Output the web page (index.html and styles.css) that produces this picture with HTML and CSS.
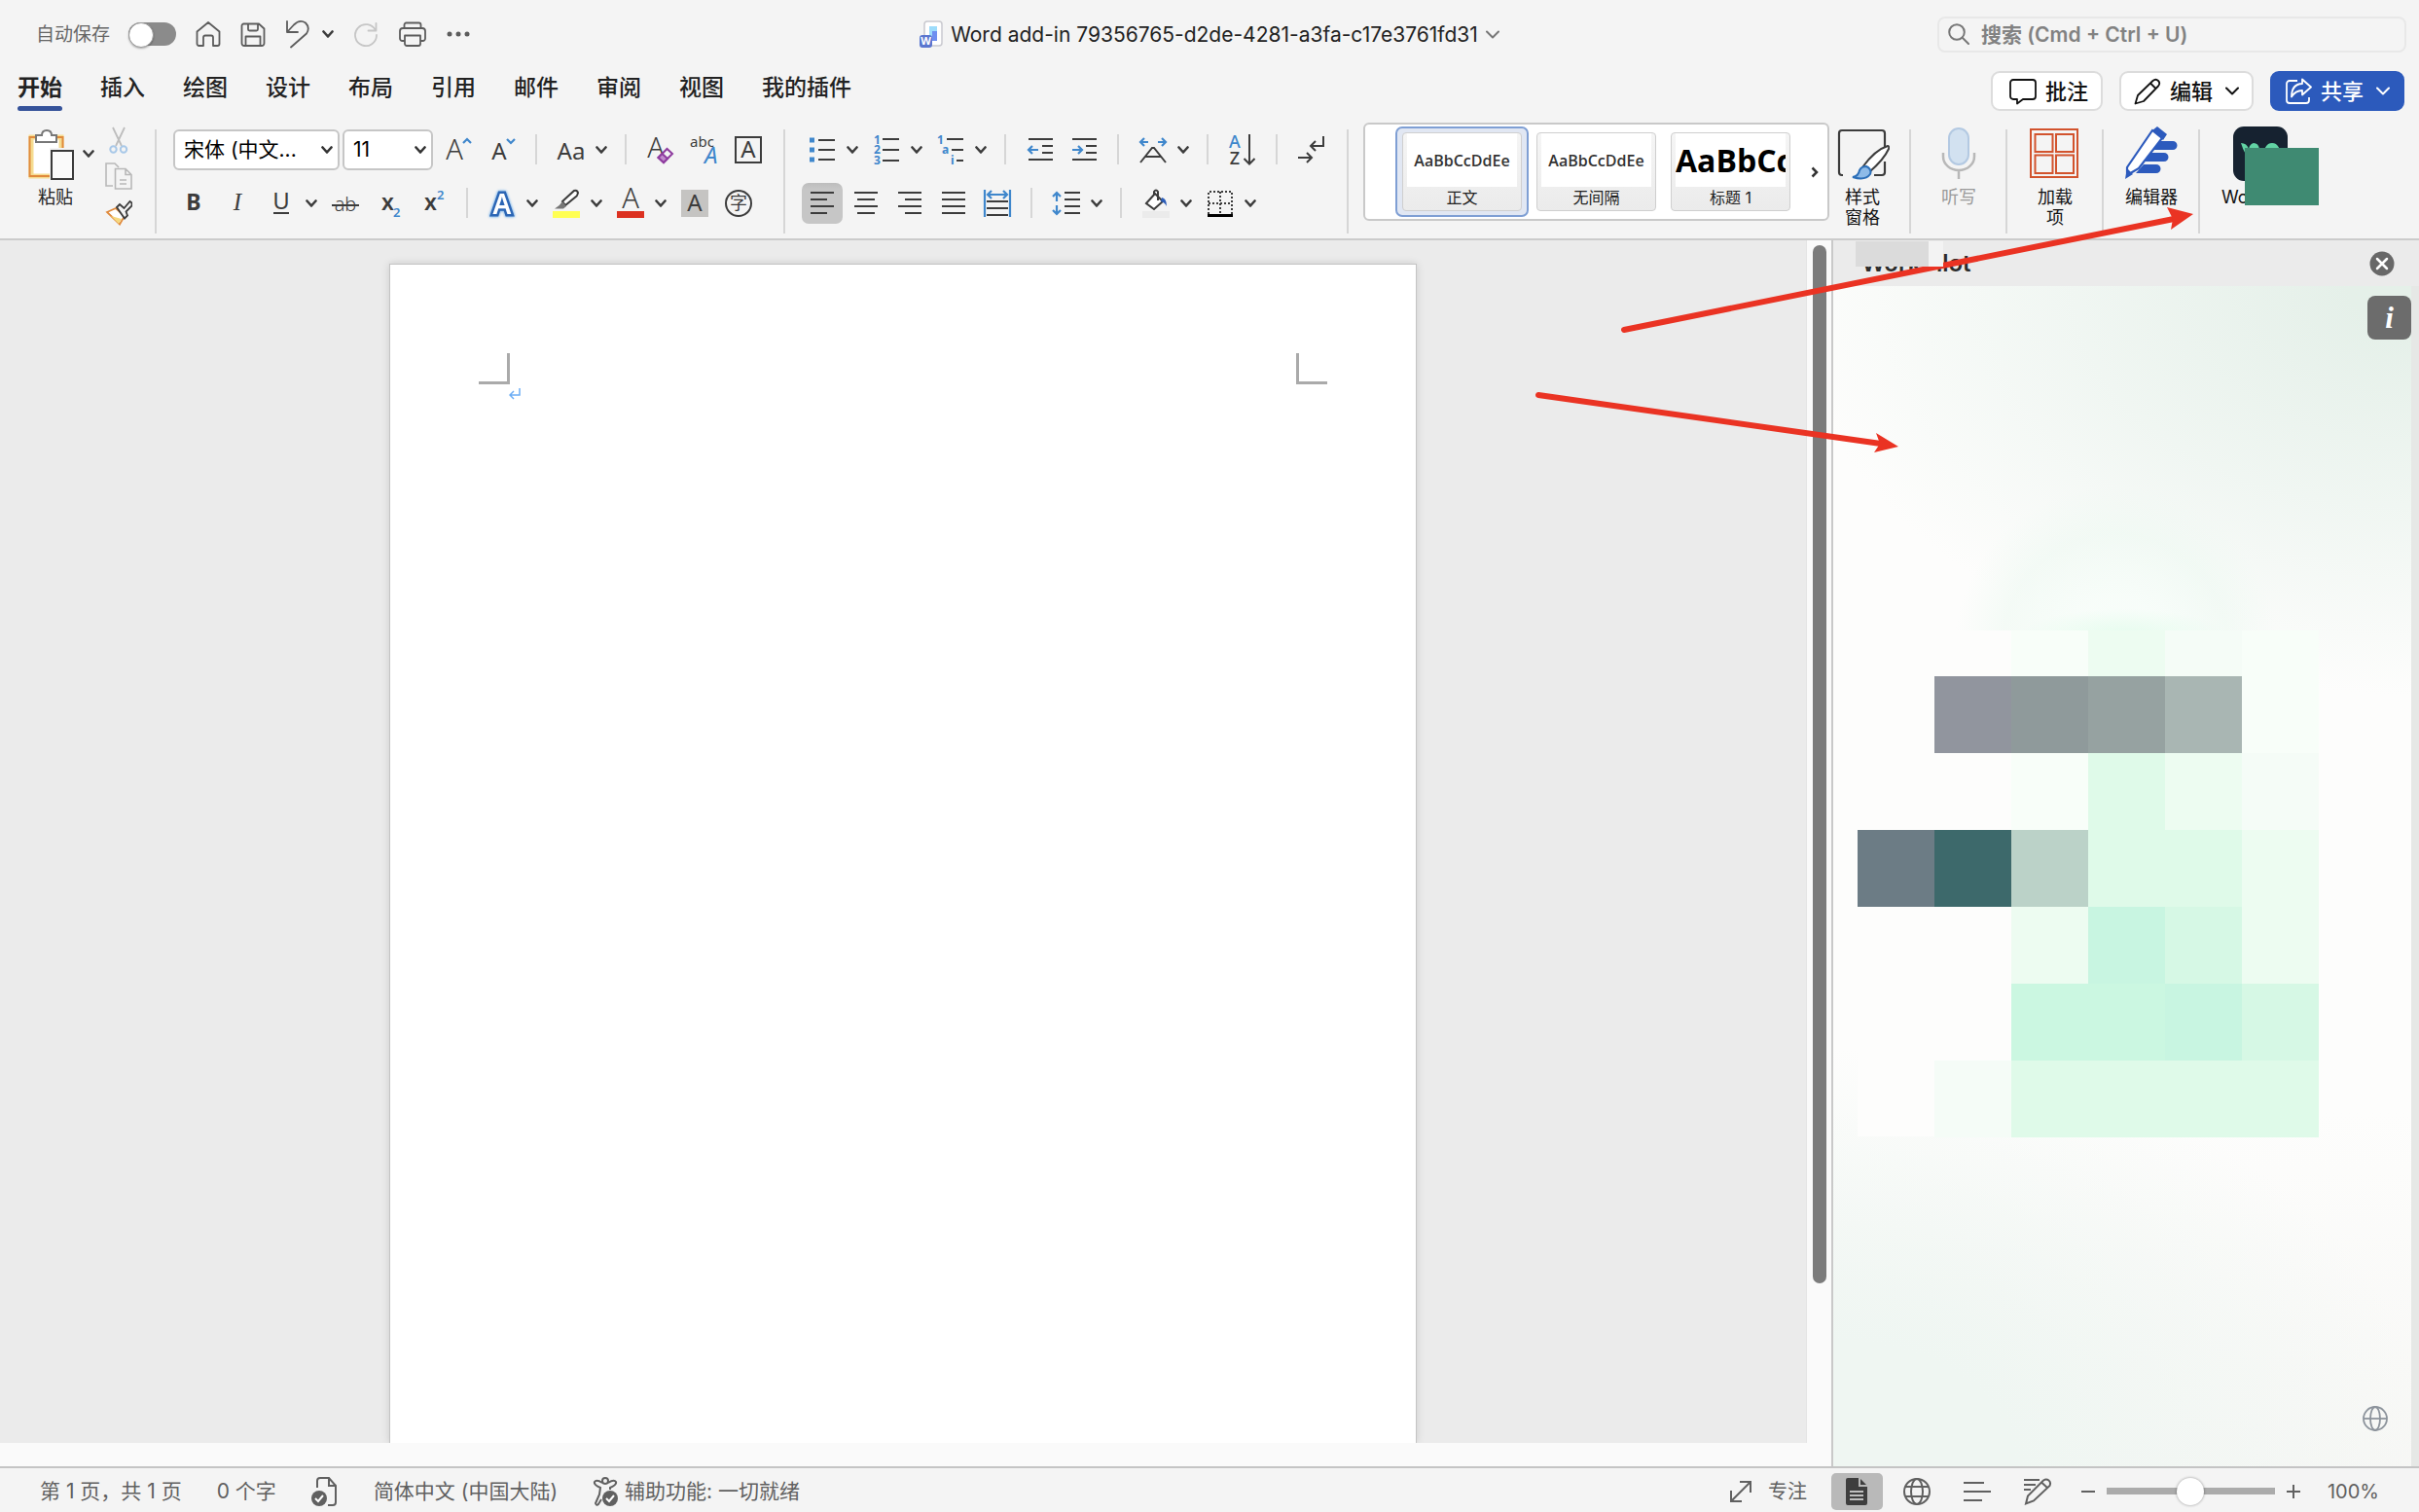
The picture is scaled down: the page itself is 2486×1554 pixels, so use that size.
FILE: index.html
```html
<!DOCTYPE html>
<html lang="zh-CN">
<head>
<meta charset="utf-8">
<title>Word add-in 79356765-d2de-4281-a3fa-c17e3761fd31</title>
<link rel="stylesheet" href="styles.css">
</head>
<body>
<svg class="defs" aria-hidden="true">
  <symbol id="chev" viewBox="0 0 12 8"><path d="M1.5 1.5 6 6.5 10.5 1.5" fill="none" stroke="currentColor" stroke-width="2.6" stroke-linecap="round" stroke-linejoin="round"/></symbol>
  <symbol id="chev-thin" viewBox="0 0 14 9"><path d="M1 1.500 7 7.500 13 1.500" fill="none" stroke="currentColor" stroke-width="2" stroke-linecap="round" stroke-linejoin="round"/></symbol>
</svg>

<header class="titlebar">
  <div class="quick">
    <label class="autosave">自动保存<input type="checkbox" class="toggle"></label>
    <button class="qbtn" aria-label="主页"><svg width="26" height="28" viewBox="0 0 26 28"><path d="M1.500 11.500 13 2l11.500 9.500V24a2 2 0 0 1-2 2H18v-8.500q0-2-2-2h-6q-2 0-2 2V26H3.500a2 2 0 0 1-2-2z"/></svg></button>
    <button class="qbtn" aria-label="保存"><svg width="26" height="28" viewBox="0 0 26 28"><path d="M3.500 3.500H19l5.500 5v15a2.500 2.500 0 0 1-2.500 2.500H4a2.500 2.500 0 0 1-2.500-2.500V5.500a2 2 0 0 1 2-2zM8 3.500V9a1.500 1.500 0 0 0 1.500 1.500h7A1.500 1.500 0 0 0 18 9V3.500M5.500 26v-9.500h15V26"/></svg></button>
    <span class="undo">
      <button class="qbtn" aria-label="撤消"><svg width="26" height="30" viewBox="0 0 26 30"><path d="M2 2v11h11M2.500 12.500 9 5.500q6-6 12-2 5 5 1 11L6 28.500"/></svg></button>
      <button class="chev dark" aria-label="撤消选项"><svg width="12" height="8"><use href="#chev"/></svg></button>
    </span>
    <button class="qbtn pale" aria-label="恢复" disabled><svg width="26" height="28" viewBox="0 0 26 28"><path d="M23.500 3v7.500h-8M23 10.500A11 11 0 1 0 24 15"/></svg></button>
    <button class="qbtn" aria-label="打印"><svg width="30" height="28" viewBox="0 0 30 28"><path d="M6.500 8V4.500a2 2 0 0 1 2-2h13a2 2 0 0 1 2 2V8M7 21H4.500A2.500 2.500 0 0 1 2 18.500v-7.500a3 3 0 0 1 3-3h20a3 3 0 0 1 3 3v7.500a2.500 2.500 0 0 1-2.500 2.500H23M7 15.500h16V24a2 2 0 0 1-2 2H9a2 2 0 0 1-2-2z"/></svg></button>
    <button class="qbtn" aria-label="更多"><svg class="solid" width="24" height="6" viewBox="0 0 24 6"><circle cx="3" cy="3" r="2.500"/><circle cx="12" cy="3" r="2.500"/><circle cx="21" cy="3" r="2.500"/></svg></button>
  </div>
  <button class="doc-title">
    <svg width="24" height="28" viewBox="0 0 24 28"><rect x="5" y="1" width="18" height="25" rx="3" fill="#fff" stroke="#c9c9cf" stroke-width="1.500"/><path d="M10 6h8v14h-8z" fill="#9ddcfb"/><path d="M13 11h5v10h-5z" fill="#6f8ff0"/><rect x="0" y="15" width="13" height="13" rx="3" fill="#5b76cf"/><text x="6.500" y="25" text-anchor="middle" class="t-badge">W</text></svg>
    <span>Word add-in 79356765-d2de-4281-a3fa-c17e3761fd31</span>
    <svg class="title-chev" width="14" height="9"><use href="#chev-thin"/></svg>
  </button>
  <label class="search">
    <svg width="22" height="22" viewBox="0 0 22 22"><circle cx="9" cy="9" r="7.800"/><path d="m15 15 6 6"/></svg>
    <input type="search" placeholder="搜索 (Cmd + Ctrl + U)" aria-label="搜索">
  </label>
</header>

<nav class="tabbar">
  <div class="tabs">
    <button class="tab active">开始</button><button class="tab">插入</button><button class="tab">绘图</button><button class="tab">设计</button><button class="tab">布局</button><button class="tab">引用</button><button class="tab">邮件</button><button class="tab">审阅</button><button class="tab">视图</button><button class="tab">我的插件</button>
  </div>
  <div class="actions">
    <button class="action"><svg width="28" height="28" viewBox="0 0 28 28"><path d="M4 2h20a3 3 0 0 1 3 3v14a3 3 0 0 1-3 3H14l-6 4.500V22H4a3 3 0 0 1-3-3V5a3 3 0 0 1 3-3z"/></svg>批注</button>
    <button class="action"><svg width="28" height="28" viewBox="0 0 28 28"><path d="M1.500 26.500 4 18 19.500 3q3-2.500 5.500 0t0 5.500L10 24zM17 5.500l5.500 5.500"/></svg>编辑<svg width="14" height="9"><use href="#chev-thin"/></svg></button>
    <button class="action primary"><svg width="28" height="28" viewBox="0 0 28 28"><path d="M13 3H5a3 3 0 0 0-3 3v17a3 3 0 0 0 3 3h17a3 3 0 0 0 3-3v-3M18 1.500l9 8-9 8v-4.500q-7 0-11 6.500 0-13 11-13.500z"/></svg>共享<svg width="14" height="9"><use href="#chev-thin"/></svg></button>
  </div>
</nav>

<section class="ribbon" aria-label="功能区">
  <div class="paste-group">
    <button class="paste">
      <span class="paste-icon"><svg width="48" height="56" viewBox="0 0 48 56"><path d="M3 11h31v40H3z" fill="#fff" stroke="#f5dc91" stroke-width="5"/><path d="M1.500 11h34v40h-34z" fill="none" stroke="#e08a3c" stroke-width="2"/><path d="M8 15h22v31H8z" fill="#fff"/><path d="M22 22h26v34H22z" fill="#f4f4f4"/><path d="M8 16V9h6q0-5 5-5t5 5h5v7z" fill="#fff" stroke="#777" stroke-width="2"/><path d="M24 25h22v29H24z" fill="#fafafa" stroke="#3a3a3a" stroke-width="2"/></svg></span>
      <span class="chev dark"><svg width="12" height="8"><use href="#chev"/></svg></span>
      <span class="paste-label">粘贴</span>
    </button>
    <div class="clip-col">
      <button aria-label="剪切"><svg width="28" height="28" viewBox="0 0 28 28"><path d="m8 1 9 19M20 1l-9 19" stroke="#bdbdbd" stroke-width="1.800"/><circle cx="8.500" cy="23.500" r="3.200" stroke="#a8c8e8" stroke-width="2"/><circle cx="19" cy="23.500" r="3.200" stroke="#a8c8e8" stroke-width="2"/></svg></button>
      <button aria-label="复制"><svg width="28" height="28" viewBox="0 0 28 28" stroke="#b8b8b8" stroke-width="1.600"><path d="M8 24H1V1h9l4 4M10.500 6.500H21l6 6V27H10.500zM21 6.500v6h6M15 18h7M15 22h7"/></svg></button>
      <button aria-label="格式刷"><svg width="28" height="28" viewBox="0 0 28 28"><path d="m2 14 9-4 9 8-5 8.500z" fill="#fff" stroke="#e08a3c" stroke-width="1.800"/><path d="m6 18 11 3-3 5z" fill="#f5d87e"/><path d="m12 9 3-3 4.500 4 6-7 2 1.500v3l-6 6 1.500 4-3 3z" fill="#f4f4f4" stroke="#3c3c3c" stroke-width="1.800"/></svg></button>
    </div>
  </div>
  <i class="gsep"></i>

  <div class="rows">
    <div class="row">
      <span class="combo combo-font"><select aria-label="字体"><option>宋体 (中文...</option></select><svg width="12" height="8"><use href="#chev"/></svg></span>
      <span class="combo combo-size"><select aria-label="字号"><option>11</option></select><svg width="12" height="8"><use href="#chev"/></svg></span>
      <button class="ic" aria-label="增大字号"><svg width="28" height="28" viewBox="0 0 28 28"><text x="10" y="24" text-anchor="middle" class="t-a26">A</text><path class="b" d="m19 7 4-4 4 4"/></svg></button>
      <button class="ic" aria-label="减小字号"><svg width="28" height="28" viewBox="0 0 28 28"><text x="11" y="24" text-anchor="middle" class="t-a22">A</text><path class="b" d="m19 3 4 4 4-4"/></svg></button>
      <i class="sep"></i>
      <button class="ic" aria-label="更改大小写"><svg width="30" height="28" viewBox="0 0 30 28"><text x="15" y="24" text-anchor="middle" class="t-a22">Aa</text></svg></button>
      <button class="chev" aria-label="大小写选项"><svg width="12" height="8"><use href="#chev"/></svg></button>
      <i class="sep"></i>
      <button class="ic" aria-label="清除格式"><svg width="28" height="28" viewBox="0 0 28 28"><text x="9" y="22" text-anchor="middle" class="t-a26">A</text><path d="m11.500 22 9-9 5.500 5-9 9z" fill="#f4f4f4" stroke="#8e3b9f" stroke-width="2"/><path d="m11.500 22 4-4 5.500 5-4 4z" fill="#c08bcc" stroke="#8e3b9f" stroke-width="2"/></svg></button>
      <button class="ic" aria-label="拼音指南"><svg width="30" height="30" viewBox="0 0 30 30"><text x="0" y="12" class="t-abc">abc</text><text x="15" y="29" class="t-bluei">A</text></svg></button>
      <button class="ic" aria-label="字符边框"><svg width="28" height="28" viewBox="0 0 28 28"><path d="M1 1h26v26H1z"/><text x="14" y="22" text-anchor="middle" class="t-a22">A</text></svg></button>
    </div>
    <div class="row">
      <button class="ic" aria-label="加粗"><svg width="28" height="28" viewBox="0 0 28 28"><text x="14" y="21" text-anchor="middle" class="t-b">B</text></svg></button>
      <button class="ic" aria-label="倾斜"><svg width="28" height="28" viewBox="0 0 28 28"><text x="14" y="21" text-anchor="middle" class="t-i">I</text></svg></button>
      <button class="ic" aria-label="下划线"><svg width="28" height="28" viewBox="0 0 28 28"><text x="14" y="20" text-anchor="middle" class="t-a22">U</text><path d="M6 24h16"/></svg></button>
      <button class="chev" aria-label="下划线选项"><svg width="12" height="8"><use href="#chev"/></svg></button>
      <button class="ic" aria-label="删除线"><svg width="28" height="28" viewBox="0 0 28 28"><text x="14" y="22" text-anchor="middle" class="t-a20">ab</text><path d="M0 16h28"/></svg></button>
      <button class="ic" aria-label="下标"><svg width="28" height="32" viewBox="0 0 28 32"><text x="6" y="23" class="t-x">x</text><text x="18" y="30" class="t-n">2</text></svg></button>
      <button class="ic" aria-label="上标"><svg width="28" height="32" viewBox="0 0 28 32"><text x="5" y="23" class="t-x">x</text><text x="18" y="12" class="t-n">2</text></svg></button>
      <i class="sep"></i>
      <button class="ic" aria-label="文本效果"><svg width="30" height="30" viewBox="0 0 30 30"><text x="15" y="26" text-anchor="middle" class="t-glow">A</text></svg></button>
      <button class="chev" aria-label="文本效果选项"><svg width="12" height="8"><use href="#chev"/></svg></button>
      <button class="ic" aria-label="突出显示"><svg width="28" height="30" viewBox="0 0 28 30"><path d="M0 23h28v7H0z" fill="#ffff54" stroke="none"/><path d="m10 13 12-11q3-1 4 2-1 4-2 4L13 17z" fill="#fff"/><path d="m10 13 4 5-3 2.500H2Q7 18 10 13z" fill="#777" stroke="none"/></svg></button>
      <button class="chev" aria-label="突出显示选项"><svg width="12" height="8"><use href="#chev"/></svg></button>
      <button class="ic" aria-label="字体颜色"><svg width="28" height="30" viewBox="0 0 28 30"><path d="M0 23h28v7H0z" fill="#dc3120" stroke="none"/><text x="14" y="20" text-anchor="middle" class="t-a26">A</text></svg></button>
      <button class="chev" aria-label="字体颜色选项"><svg width="12" height="8"><use href="#chev"/></svg></button>
      <button class="ic" aria-label="字符底纹"><svg width="28" height="28" viewBox="0 0 28 28"><path d="M0 0h28v28H0z" fill="#c5c4c2" stroke="none"/><text x="14" y="22" text-anchor="middle" class="t-a22">A</text></svg></button>
      <button class="ic" aria-label="带圈字符"><svg width="28" height="28" viewBox="0 0 28 28"><circle cx="14" cy="14" r="13"/><text x="14" y="20" text-anchor="middle" class="t-zi">字</text></svg></button>
    </div>
  </div>
  <i class="gsep"></i>

  <div class="rows">
    <div class="row">
      <button class="ic" aria-label="项目符号"><svg width="28" height="28" viewBox="0 0 28 28"><path d="M10 4h17M10 14h17M10 24h17"/><path d="M1 1.500h5v5H1zM1 11.500h5v5H1zM1 21.500h5v5H1z" fill="#3f87cc" stroke="none"/></svg></button>
      <button class="chev" aria-label="项目符号选项"><svg width="12" height="8"><use href="#chev"/></svg></button>
      <button class="ic" aria-label="编号"><svg width="28" height="30" viewBox="0 0 28 30"><path d="M10 4h17M10 15h17M10 26h17"/><text x="1" y="9" class="t-num">1</text><text x="1" y="19" class="t-num">2</text><text x="1" y="30" class="t-num">3</text></svg></button>
      <button class="chev" aria-label="编号选项"><svg width="12" height="8"><use href="#chev"/></svg></button>
      <button class="ic" aria-label="多级列表"><svg width="28" height="30" viewBox="0 0 28 30"><path d="M10 4h17M15 15h12M20 26h7"/><text x="0" y="9" class="t-num">1</text><text x="5" y="19" class="t-num">a</text><text x="14" y="30" class="t-num">i</text></svg></button>
      <button class="chev" aria-label="多级列表选项"><svg width="12" height="8"><use href="#chev"/></svg></button>
      <i class="sep"></i>
      <button class="ic" aria-label="减少缩进"><svg width="28" height="28" viewBox="0 0 28 28"><path d="M2 3h25M16 10h11M16 17h11M2 24h25"/><path class="b" d="M2 14h10M6 10l-4 4 4 4"/></svg></button>
      <button class="ic" aria-label="增加缩进"><svg width="28" height="28" viewBox="0 0 28 28"><path d="M2 3h25M16 10h11M16 17h11M2 24h25"/><path class="b" d="M2 14h10M8 10l4 4-4 4"/></svg></button>
      <i class="sep"></i>
      <button class="ic" aria-label="中文版式"><svg width="28" height="28" viewBox="0 0 28 28"><path d="M1 27 13 12h2l12 15M6 21h16"/><path class="b" d="M1 6h8M5 2 1 6l4 4M27 6h-8M23 2l4 4-4 4"/></svg></button>
      <button class="chev" aria-label="中文版式选项"><svg width="12" height="8"><use href="#chev"/></svg></button>
      <i class="sep"></i>
      <button class="ic" aria-label="排序"><svg width="28" height="32" viewBox="0 0 28 32"><text x="6" y="14" text-anchor="middle" class="t-sort blue">A</text><text x="6" y="31" text-anchor="middle" class="t-sort">Z</text><path d="M21 0v30M15.500 25l5.500 5.500 5.500-5.500"/></svg></button>
      <i class="sep"></i>
      <button class="ic" aria-label="显示编辑标记"><svg width="30" height="30" viewBox="0 0 30 30"><path d="M27 1v10H14M19 6l-5 5 5 5M1 23h14M10 18l5 5-5 5"/></svg></button>
    </div>
    <div class="row">
      <button class="ic on" aria-label="左对齐"><svg width="28" height="28" viewBox="0 0 28 28"><path d="M2 3h24M2 10h17M2 17h24M2 24h17"/></svg></button>
      <button class="ic" aria-label="居中"><svg width="28" height="28" viewBox="0 0 28 28"><path d="M2 3h24M5 10h18M2 17h24M5 24h18"/></svg></button>
      <button class="ic" aria-label="右对齐"><svg width="28" height="28" viewBox="0 0 28 28"><path d="M2 3h24M9 10h17M2 17h24M9 24h17"/></svg></button>
      <button class="ic" aria-label="两端对齐"><svg width="28" height="28" viewBox="0 0 28 28"><path d="M2 3h24M2 10h24M2 17h24M2 24h24"/></svg></button>
      <button class="ic" aria-label="分散对齐"><svg width="28" height="28" viewBox="0 0 28 28"><path d="M3 12h22M3 19h22M3 26h22"/><path class="b" d="M1 0v28M27 0v28M4 5h20M8 1 4 5l4 4M20 1l4 4-4 4"/></svg></button>
      <i class="sep"></i>
      <button class="ic" aria-label="行距"><svg width="28" height="28" viewBox="0 0 28 28"><path d="M12 3h16M12 10h16M12 17h16M12 24h16"/><path class="b" d="M4 12V3M0 7l4-4 4 4M4 16v9M0 21l4 4 4-4"/></svg></button>
      <button class="chev" aria-label="行距选项"><svg width="12" height="8"><use href="#chev"/></svg></button>
      <i class="sep"></i>
      <button class="ic" aria-label="底纹"><svg width="28" height="30" viewBox="0 0 28 30"><path d="M0 23h28v7H0z" fill="#ebebeb" stroke="none"/><path d="m4 15 9-10 8 8-9 8zM12 6V3q2-3 4 0v9" fill="#fff"/><path d="M20 9q5 1 5 9-2-4-6-5z" fill="#2c5db8" stroke="none"/></svg></button>
      <button class="chev" aria-label="底纹选项"><svg width="12" height="8"><use href="#chev"/></svg></button>
      <button class="ic" aria-label="边框"><svg width="28" height="28" viewBox="0 0 28 28"><path d="M2 25V2h24v23M14 2v23M2 14h24" stroke-dasharray="2 2"/><path d="M1 26.500h26" stroke="#000" stroke-width="3"/></svg></button>
      <button class="chev" aria-label="边框选项"><svg width="12" height="8"><use href="#chev"/></svg></button>
    </div>
  </div>
  <i class="gsep"></i>

  <div class="gallery">
    <button class="style selected"><span class="card"><span class="sample">AaBbCcDdEe</span><span class="name">正文</span></span></button>
    <button class="style"><span class="card"><span class="sample">AaBbCcDdEe</span><span class="name">无间隔</span></span></button>
    <button class="style"><span class="card"><span class="sample heading">AaBbCc</span><span class="name">标题 1</span></span></button>
    <button class="gallery-next" aria-label="更多样式"><svg width="8" height="12" viewBox="0 0 8 12"><path d="M1.500 1.500 6 6l-4.500 4.500" fill="none" stroke="#333" stroke-width="2.500"/></svg></button>
  </div>
  <button class="big"><svg width="56" height="56" viewBox="0 0 56 56"><path d="M8 50H7a3 3 0 0 1-3-3V7a3 3 0 0 1 3-3h41a3 3 0 0 1 3 3v15M51 36v11a3 3 0 0 1-3 3h-8" fill="none" stroke="#3c3c3c" stroke-width="2.200"/><path d="M28 42Q41 24 54 20q2 1 1 3-5 11-20 24z" fill="#fff" stroke="#3c3c3c" stroke-width="2"/><path d="M18 52q6-1 7-7 2-4 7-4 6 3 4 8-5 7-18 3z" fill="#8ebbe8" stroke="#2c6fb8" stroke-width="2"/></svg><span>样式<br>窗格</span></button>
  <i class="gsep"></i>
  <button class="big" disabled><svg width="56" height="56" viewBox="0 0 56 56"><rect x="18" y="2" width="20" height="37" rx="10" fill="#d2e1f0" stroke="#b3c9e2" stroke-width="2"/><path d="M12 27v4a16 14 0 0 0 32 0v-4M28 45v9" fill="none" stroke="#b8b8b8" stroke-width="2.500"/></svg><span>听写</span></button>
  <i class="gsep"></i>
  <button class="big"><svg width="56" height="56" viewBox="0 0 56 56" fill="none" stroke="#d2532d" stroke-width="2"><path d="M3 3h48v49H3zM7.500 8h18v18h-18zM29 8h18v18H29zM7.500 29.500h18V48h-18zM29 29.500h18V48H29z"/></svg><span>加载<br>项</span></button>
  <i class="gsep"></i>
  <button class="big"><svg width="56" height="56" viewBox="0 0 56 56"><path d="M34 15h16a4 4 0 0 1 0 9H28zM27 27h14a4 4 0 0 1 0 9H20zM20 39h13a4 4 0 0 1 0 9H12z" fill="#2c5abd"/><path d="M3 50v-8L29 4l10 8-24 31z" fill="#fff" stroke="#2c5abd" stroke-width="2.200"/><path d="m29 4 5-4 10 8-4 6zM1 54l2-11 6 6z" fill="#2c5abd"/></svg><span>编辑器</span></button>
  <i class="gsep"></i>
  <button class="addin"><svg width="56" height="56" viewBox="0 0 56 56"><rect width="56" height="56" rx="11" fill="#162230"/><path d="M8 17q6 0 8 6 1-5 5-6 5 0 6 6V34H18Q12 30 8 17zM31 34q0-17 9-17t9 17z" fill="#62d3a4"/></svg><span>Wo</span><i class="patch"></i></button>
</section>

<main class="workspace">
  <section class="document" aria-label="文档">
    <div class="canvas">
      <article class="page">
        <div class="margins"><i class="corner left"></i><i class="corner right"></i></div>
        <p class="para"><svg width="12" height="12" viewBox="0 0 12 12"><path d="M11 0v7H1M5 3 1 7l4 4" fill="none" stroke="#6cadf5" stroke-width="1.500"/></svg></p>
      </article>
    </div>
    <div class="vscroll"><i class="thumb"></i></div>
  </section>
  <aside class="pane">
    <header class="pane-head">
      <h2>WorkPilot<i class="pixel p1"></i><i class="pixel p2"></i></h2>
      <button aria-label="关闭"><svg width="26" height="26" viewBox="0 0 26 26"><circle cx="13" cy="13" r="12.500" fill="#686868"/><path d="m8 8 10 10M18 8 8 18" stroke="#fff" stroke-width="2.500" stroke-linecap="round"/></svg></button>
    </header>
    <div class="pane-body">
      <button class="info" aria-label="信息">i</button>
      <div class="mosaic">
        <i></i><i></i><i class="c1"></i><i class="c3"></i><i class="c2"></i><i class="c1"></i>
        <i></i><i class="d1"></i><i class="d2"></i><i class="d3"></i><i class="d4"></i><i class="c1"></i>
        <i></i><i></i><i class="c1"></i><i class="c4"></i><i class="c3"></i><i class="c2"></i>
        <i class="d5"></i><i class="d6"></i><i class="d7"></i><i class="c4"></i><i class="c4"></i><i class="c3"></i>
        <i></i><i></i><i class="c3"></i><i class="c7"></i><i class="c5"></i><i class="c3"></i>
        <i></i><i></i><i class="c6"></i><i class="c6"></i><i class="c7"></i><i class="c5"></i>
        <i></i><i class="c2"></i><i class="c4"></i><i class="c4"></i><i class="c4"></i><i class="c4"></i>
      </div>
      <button class="lang" aria-label="语言"><svg width="26" height="26" viewBox="0 0 26 26" fill="none" stroke="#8d949c" stroke-width="1.800"><circle cx="13" cy="13" r="12"/><ellipse cx="13" cy="13" rx="5" ry="12"/><path d="M1 13h24"/></svg></button>
    </div>
  </aside>
</main>

<footer class="status">
  <div class="status-left">
    <span class="pages">第 1 页，共 1 页</span>
    <span>0 个字</span>
    <button aria-label="校对"><svg width="28" height="30" viewBox="0 0 28 30"><path d="M6 11V4a3 3 0 0 1 3-3h9l7 8v17a3 3 0 0 1-3 3h-5M18 1v8h7"/><circle cx="8" cy="22" r="8" class="fillc"/><path d="m4 22 3 3 5-6" class="tick"/></svg></button>
    <span>简体中文 (中国大陆)</span>
    <button class="access"><svg width="26" height="30" viewBox="0 0 26 30"><circle cx="13" cy="4" r="3"/><path d="M10 6Q4 2 2 5q-1 3 6 6l-1 7-4 9q1 3 3 1l3-5M16 6q6-4 8-1 1 3-6 6v2"/><circle cx="18" cy="22" r="8" class="fillc"/><path d="m14 22 3 3 5-6" class="tick"/></svg>辅助功能: 一切就绪</button>
  </div>
  <div class="status-right">
    <button class="focus"><svg width="22" height="22" viewBox="0 0 22 22"><path d="M1 10v11h11M1 21 21 1M10 1h11v11"/></svg>专注</button>
    <button class="view on" aria-label="页面视图"><svg width="22" height="28" viewBox="0 0 22 28"><path d="M2 0h11v9h9v17a2 2 0 0 1-2 2H2a2 2 0 0 1-2-2V2a2 2 0 0 1 2-2z" fill="#3e3e3e" stroke="none"/><path d="m15 1 6 6h-6z" fill="#3e3e3e" stroke="none"/><path d="M4 14h14M4 18h14M4 22h14" stroke="#c0c0c0"/></svg></button>
    <button class="view" aria-label="Web 视图"><svg width="28" height="28" viewBox="0 0 28 28"><circle cx="14" cy="14" r="13"/><ellipse cx="14" cy="14" rx="6" ry="13"/><path d="M2 9h24M2 19h24"/></svg></button>
    <button class="view" aria-label="大纲"><svg width="28" height="20" viewBox="0 0 28 20"><path d="M0 1h21M0 10h28M0 19h19"/></svg></button>
    <button class="view" aria-label="草稿"><svg width="28" height="28" viewBox="0 0 28 28"><path d="M0 2h16M0 7h12M0 12h7M2 26.500l2-8L20 2.500q3-2 5.500 0t1 5.500L10 23.500zM18 4.500l6 5.500"/></svg></button>
    <div class="zoom">
      <button class="zoom-step" aria-label="缩小"><svg width="14" height="14" viewBox="0 0 14 14"><path d="M0 7h14"/></svg></button>
      <input type="range" min="0" max="100" value="50" aria-label="缩放">
      <button class="zoom-step" aria-label="放大"><svg width="14" height="14" viewBox="0 0 14 14"><path d="M0 7h14M7 0v14"/></svg></button>
    </div>
    <span class="percent">100%</span>
  </div>
</footer>

<svg class="arrows" width="690" height="260" viewBox="0 0 690 260" aria-hidden="true">
  <g fill="none" stroke="#ea3323" stroke-width="6" stroke-linecap="round"><path d="M99 129 664 15M11 196l352 50"/></g>
  <g fill="#ea3323"><path d="m684 10-27-7 6 12-2 11z"/><path d="m381 249-23-14 4 11-6 9z"/></g>
</svg>
</body>
</html>
```
FILE: styles.css
```css
* { box-sizing: border-box; }
body {
  margin: 0;
  min-height: 100vh;
  display: flex;
  flex-direction: column;
  position: relative;
  overflow: hidden;
  background: #f4f4f4;
  color: #222;
  font: 21px/1 Inter, "Noto Sans CJK SC", sans-serif;
}
button, input, select {
  font: inherit;
  color: inherit;
  border: 0;
  margin: 0;
  padding: 0;
  background: none;
}
svg { display: block; flex: none; }
i { display: block; font-style: normal; }
.defs { position: absolute; width: 0; height: 0; }

/* title bar */
.titlebar {
  display: grid;
  grid-template-columns: 1fr auto 1fr;
  align-items: center;
  height: 70px;
  padding: 0 13px;
}
.quick { display: flex; align-items: center; gap: 20px; padding-left: 24px; }
.autosave { display: flex; align-items: center; gap: 19px; font-size: 19px; color: #666; }
.toggle {
  appearance: none;
  display: flex;
  width: 49px;
  height: 24px;
  border-radius: 12px;
  background: #8b8b8b;
}
.toggle::before {
  content: "";
  width: 24px;
  height: 24px;
  border: 1px solid #999;
  border-radius: 50%;
  background: #fff;
  box-shadow: 0 1px 2px rgba(0, 0, 0, .3);
}
.qbtn { display: flex; }
.qbtn svg, .search svg { fill: none; stroke: #5c5c5c; stroke-width: 1.800; stroke-linejoin: round; stroke-linecap: round; }
.qbtn svg.solid { fill: #5c5c5c; stroke: none; }
.qbtn.pale svg { stroke: #c6c6c6; }
.undo { display: flex; align-items: center; gap: 12px; }
.doc-title { display: flex; align-items: center; gap: 8px; font-size: 21px; color: #222; }
.title-chev { color: #777; }
.t-badge { font: bold 11px "Open Sans", sans-serif; fill: #fff; }
.search {
  justify-self: end;
  display: flex;
  align-items: center;
  gap: 12px;
  width: 482px;
  height: 37px;
  padding: 0 9px;
  border: 2px solid #e8e8e8;
  border-radius: 8px;
}
.search svg { stroke: #777; stroke-width: 2; }
.search input { flex: 1; min-width: 0; font-weight: 600; outline: 0; }
.search input::placeholder { color: #828282; opacity: 1; }

/* tabs */
.tabbar { display: flex; justify-content: space-between; height: 48px; padding: 0 15px 0 18px; }
.tabs { display: flex; align-items: flex-start; gap: 39px; }
.tab { padding-top: 3px; font-size: 23px; font-weight: 500; line-height: 35px; white-space: nowrap; }
.tab::after { content: ""; display: block; height: 5px; margin-top: 1px; border-radius: 3px; }
.tab.active { font-weight: 600; }
.tab.active::after { background: #36539a; }
.actions { display: flex; align-items: center; gap: 17px; height: 47px; }
.action {
  display: flex;
  align-items: center;
  gap: 9px;
  height: 41px;
  padding: 0 13px;
  border: 2px solid #dcdcdc;
  border-radius: 9px;
  background: #fff;
  font-size: 22px;
  font-weight: 500;
  color: #111;
}
.action svg { fill: none; stroke: currentColor; stroke-width: 1.800; stroke-linejoin: round; }
.action svg:last-child { margin-left: 4px; }
.action.primary { background: #2c5abc; border-color: #2c5abc; color: #fff; }

/* ribbon */
.ribbon {
  display: flex;
  align-items: flex-start;
  height: 129px;
  padding: 8px 0 0 29px;
  border-bottom: 2px solid #cbcbcb;
}
.gsep { width: 2px; height: 107px; margin: 7px 15px 0 14px; background: #d6d6d6; flex: none; }
.sep { width: 26px; height: 31px; flex: none; }
.sep::before { content: ""; display: block; width: 2px; height: 31px; margin: 0 auto; background: #d6d6d6; }
.rows { display: flex; flex-direction: column; flex: none; }
.row { display: flex; align-items: center; height: 55px; }
.ic { display: flex; align-items: center; justify-content: center; width: 45px; height: 42px; flex: none; }
.ic svg { fill: none; stroke: #3c3c3c; stroke-width: 2; overflow: visible; }
.ic.on { background: linear-gradient(#bdbdbd, #c6c6c6 6px); border-radius: 7px; width: 42px; margin: 0 1px 0 2px; }
.ic .b { stroke: #3f87cc; stroke-width: 2.200; }
.chev { display: flex; justify-content: center; width: 18px; margin-right: 3px; color: #3c3c3c; flex: none; }
.chev.dark { width: 12px; margin: 0; }
.ic text { font-family: "Noto Sans", "Noto Sans CJK SC", sans-serif; fill: #3c3c3c; stroke: none; }
.ic .t-a26 { font-size: 29px; font-weight: 300; }
.ic .t-a22 { font-size: 24px; font-weight: 400; }
.ic .t-a20 { font-size: 20px; font-weight: 300; }
.ic .t-abc { font-size: 15px; }
.ic .t-bluei { font-size: 24px; font-style: italic; fill: #3f87cc; }
.ic .t-b { font-size: 23px; font-weight: 700; }
.ic .t-i { font: italic 25px "Liberation Serif", serif; }
.ic .t-x { font-size: 23px; font-weight: 600; }
.ic .t-n { font-size: 13px; font-weight: 600; fill: #3f87cc; }
.ic .t-zi { font-size: 18px; }
.ic .t-num { font-size: 12px; font-weight: 700; fill: #3f87cc; }
.ic .t-sort { font-size: 18px; font-weight: 500; }
.ic .t-sort.blue { fill: #3f87cc; }
.ic .t-glow {
  font-size: 28px;
  font-weight: 600;
  fill: #fff;
  stroke: #2c66b5;
  stroke-width: 5;
  paint-order: stroke;
  filter: drop-shadow(0 0 1px #8fc0ee) drop-shadow(0 0 1px #8fc0ee);
}

.paste-group { display: flex; align-items: flex-start; padding-right: 9px; }
.paste { display: grid; grid-template-columns: 56px 12px; align-items: center; margin-top: 4px; row-gap: 6px; font-size: 18px; line-height: 21px; }
.paste-label { grid-column: 1; }
.clip-col { display: flex; flex-direction: column; gap: 9px; margin: 4px 0 0 11px; }
.clip-col svg { fill: none; }

.combo { display: flex; align-items: center; height: 42px; margin-right: 3px; padding: 0 5px 0 9px; border: 2px solid #c6c6c6; border-radius: 6px; background: #fff; color: #333; flex: none; }
.combo select { appearance: none; flex: 1; min-width: 0; color: #000; outline: 0; }
.combo-font { width: 171px; margin-left: 2px; }
.combo-size { width: 93px; }

.gallery { display: flex; gap: 1px; width: 479px; height: 101px; padding: 2px 0 2px 31px; border: 2px solid #c9c9c9; border-radius: 6px; background: #fff; flex: none; }
.style { width: 137px; height: 93px; padding: 4px 5px; border: 2px solid transparent; border-radius: 7px; flex: none; }
.style.selected { border-color: #7f9fd4; background: #e1e7f3; }
.card { display: flex; flex-direction: column; height: 81px; border: 1px solid #cfcfcf; border-radius: 4px; background: linear-gradient(#f5f5f5, #ebebeb); overflow: hidden; }
.sample { display: flex; align-items: center; justify-content: center; height: 55px; margin: 0 4px; background: #fff; font: 600 16px "Open Sans", sans-serif; color: #333; overflow: hidden; }
.sample.heading { justify-content: flex-start; font-size: 32px; font-weight: 700; color: #000; }
.name { font-size: 16px; line-height: 22px; }
.gallery-next { display: flex; flex: 1; align-items: center; justify-content: flex-end; padding-right: 9px; }

.big { display: flex; flex-direction: column; align-items: center; gap: 6px; width: 68px; padding-top: 4px; font-size: 18px; line-height: 21px; color: #111; flex: none; }
.big:disabled { color: #9a9a9a; }
.big span { white-space: nowrap; }
.addin { position: relative; display: flex; flex-direction: column; gap: 6px; width: 108px; padding: 4px 0 0 19px; font-size: 18px; line-height: 21px; text-align: left; color: #111; flex: none; }
.addin span { margin-left: -12px; }
.patch { position: absolute; left: 31px; top: 26px; width: 76px; height: 59px; background: #3f8a72; }

/* workspace */
.workspace { display: flex; flex: 1; min-height: 0; }
.document { flex: 1; display: grid; grid-template-columns: 1fr 26px; padding-bottom: 24px; background: #fafafa; }
.canvas { display: flex; justify-content: center; padding-top: 24px; background: #ebebeb; overflow: hidden; }
.page { width: 1056px; background: #fff; border: 1px solid #c4c4c4; border-bottom: 0; box-shadow: 0 0 8px rgba(0, 0, 0, .14); }
.margins { display: flex; justify-content: space-between; padding: 91px 91px 0; }
.corner { width: 32px; height: 32px; border: 0 solid #aaa; border-bottom-width: 3px; }
.corner.left { border-right-width: 3px; }
.corner.right { border-left-width: 3px; }
.para { margin: 4px 0 0 122px; }
.vscroll { display: flex; justify-content: center; padding-top: 5px; border-left: 1px solid #e4e4e4; }
.thumb { width: 14px; height: 1067px; border-radius: 7px; background: #7c7c7c; }

.pane { display: flex; flex-direction: column; width: 604px; border-left: 2px solid #c9c9c9; }
.pane-head { display: flex; justify-content: space-between; align-items: center; height: 47px; padding: 0 25px 0 29px; background: #ebebeb; }
.pane-head h2 { position: relative; margin: 0; font-size: 24px; font-weight: 600; line-height: 47px; color: #2c2c2c; }
.pixel { position: absolute; top: 1px; height: 26px; z-index: 3; }
.p1 { left: -6px; width: 75px; background: #dbdbdb; }
.p2 { left: 69px; width: 15px; background: #f3f3f3; }
.pane-body {
  flex: 1;
  display: flex;
  flex-direction: column;
  padding: 10px 8px 0 25px;
  border-right: 8px solid #e6e8e6;
  background:
    linear-gradient(#fdfdfc, #fdfdfc) 25px 354px / 473px 520px no-repeat,
    radial-gradient(ellipse 105px 26px at 298px 358px, #e6fcee, rgba(230, 252, 238, 0)),
    radial-gradient(circle 165px at 290px 370px, rgba(247, 253, 249, .9) 30%, rgba(238, 249, 242, .6) 70%, rgba(244, 251, 246, 0)),
    radial-gradient(ellipse 640px 420px at 100% 0, #e5f0e9 10%, rgba(236, 244, 239, .75) 55%, rgba(253, 253, 252, 0)),
    radial-gradient(ellipse 620px 430px at 0 100%, #eff6f2 30%, rgba(253, 253, 252, 0)),
    linear-gradient(#fdfdfc 70%, #f7f7f5);
}
.info { align-self: flex-end; width: 45px; height: 45px; margin-right: -8px; border-radius: 8px; background: #6c6c6c; color: #fff; font: italic bold 31px "Liberation Serif", serif; }
.mosaic { display: grid; grid-template-columns: repeat(6, 79px); grid-template-rows: 47px repeat(6, 79px); margin-top: 299px; }
.c1 { background: #f8fef9; }
.c2 { background: #f5fcf7; }
.c3 { background: #edfcf1; }
.c4 { background: #dffae9; }
.c5 { background: #d6f8e5; }
.c6 { background: #cbf7e1; }
.c7 { background: #c8f5e1; }
.d1 { background: #91959e; }
.d2 { background: #8f9a9b; }
.d3 { background: #96a2a1; }
.d4 { background: #a9b6b3; }
.d5 { background: #6c7c85; }
.d6 { background: #3d696b; }
.d7 { background: #bbd2c8; }
.lang { align-self: flex-end; margin: auto 16px 36px 0; }

/* status bar */
.status { display: flex; justify-content: space-between; align-items: center; height: 47px; padding: 2px 41px 0 41px; border-top: 2px solid #c4c4c4; color: #606060; white-space: nowrap; }
.status svg { fill: none; stroke: #606060; stroke-width: 2; overflow: visible; }
.status .fillc { fill: #606060; stroke: none; }
.status .tick { stroke: #fff; }
.status-left { display: flex; align-items: center; gap: 36px; }
.status-right { display: flex; align-items: center; font-size: 20px; }
.access, .focus { display: flex; align-items: center; gap: 7px; }
.focus { gap: 17px; margin-right: 25px; }
.view { display: flex; align-items: center; justify-content: center; width: 53px; height: 38px; margin-right: 9px; border-radius: 5px; }
.view.on { background: #b9b9b9; }
.zoom { display: flex; align-items: center; gap: 12px; margin-left: 9px; }
.zoom-step { display: flex; width: 14px; }
.status input[type="range"] { appearance: none; width: 173px; height: 28px; background: linear-gradient(#ababab, #ababab) center / 100% 7px no-repeat; border-radius: 4px; }
.status input[type="range"]::-webkit-slider-thumb { appearance: none; width: 28px; height: 28px; border-radius: 50%; background: #fff; box-shadow: 0 0 3px rgba(0, 0, 0, .4); }
.percent { margin-left: 28px; }

/* annotation arrows over the window */
.arrows { position: absolute; right: 226px; top: 210px; pointer-events: none; z-index: 2; }
```
